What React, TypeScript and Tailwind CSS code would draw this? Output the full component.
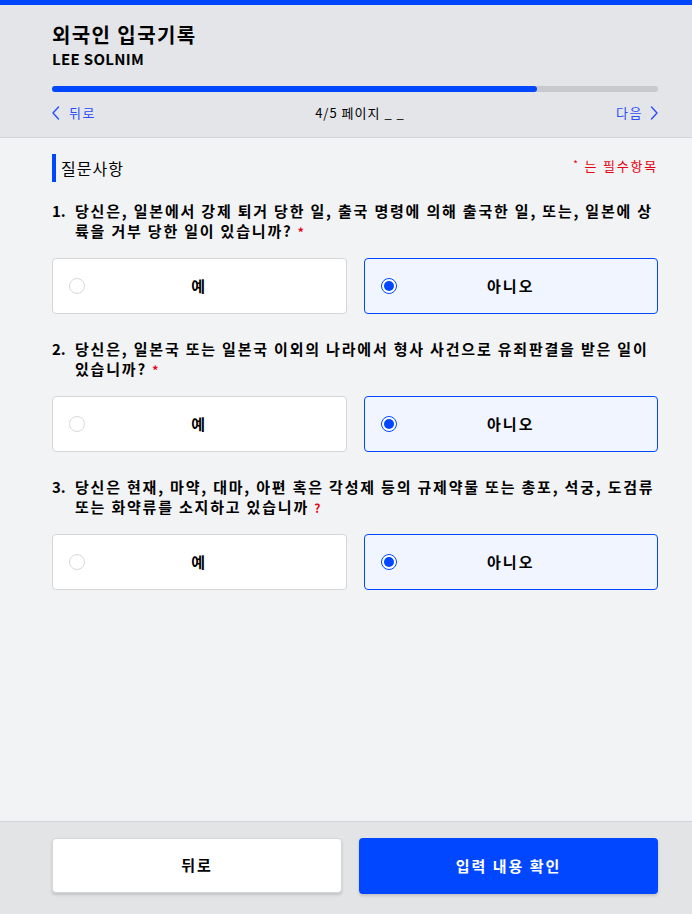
const questions = [
  {
    no: "1.",
    text: "당신은, 일본에서 강제 퇴거 당한 일, 출국 명령에 의해 출국한 일, 또는, 일본에 상륙을 거부 당한 일이 있습니까?",
    mark: "*",
  },
  {
    no: "2.",
    text: "당신은, 일본국 또는 일본국 이외의 나라에서 형사 사건으로 유죄판결을 받은 일이 있습니까?",
    mark: "*",
  },
  {
    no: "3.",
    text: "당신은 현재, 마약, 대마, 아편 혹은 각성제 등의 규제약물 또는 총포, 석궁, 도검류 또는 화약류를 소지하고 있습니까",
    mark: "?",
  },
];

const Chevron = ({ dir }: { dir: "left" | "right" }) => (
  <svg width="8" height="14" viewBox="0 0 8 14" fill="none" className="shrink-0">
    <polyline
      points={dir === "left" ? "6.5,1 1,7 6.5,13" : "1.5,1 7,7 1.5,13"}
      stroke="#2a4dff"
      strokeWidth="1.4"
      strokeLinecap="round"
      strokeLinejoin="round"
    />
  </svg>
);

const Option = ({ label, selected }: { label: string; selected: boolean }) => (
  <div
    className={
      selected
        ? "relative flex h-[56px] items-center justify-center rounded-[4px] border border-[#0047ff] bg-[#f0f5ff]"
        : "relative flex h-[56px] items-center justify-center rounded-[4px] border border-[#d6d6d6] bg-white"
    }
  >
    <span
      className={
        selected
          ? "absolute left-[16px] top-1/2 flex h-[16px] w-[16px] -translate-y-1/2 items-center justify-center rounded-full border border-[#0047ff] bg-white"
          : "absolute left-[16px] top-1/2 h-[16px] w-[16px] -translate-y-1/2 rounded-full border border-[#d9d9d9] bg-white"
      }
    >
      {selected && <span className="h-[10px] w-[10px] rounded-full bg-[#0047ff]" />}
    </span>
    <span className="text-[15px] font-bold tracking-[2px] text-black">{label}</span>
  </div>
);

export default function App() {
  return (
    <div
      className="flex h-[914px] w-[692px] flex-col bg-[#f2f3f5]"
      style={{ fontFamily: '"Noto Sans CJK KR", "Noto Sans", sans-serif' }}
    >
      <div className="h-[5px] bg-[#0047ff]" />
      {/* Header */}
      <div className="border-b border-[#d4d5d8] bg-[#e4e5e8] pl-[52px] pr-[34px] pt-[16px] pb-[15px]">
        <h1 className="text-[20px] font-bold leading-[28px] tracking-[1.4px] text-black">외국인 입국기록</h1>
        <div className="text-[15px] font-bold leading-[20px] tracking-[0.3px] text-black">LEE SOLNIM</div>
        <div className="mt-[17px] h-[6px] w-full rounded-full bg-[#c8c9cc]">
          <div className="h-full w-[80%] rounded-full bg-[#0047ff]" />
        </div>
        <div className="mt-[12px] flex items-center justify-between text-[13px] leading-[18px]">
          <div className="flex items-center gap-[9px] tracking-[1.5px] text-[#2a4dff]">
            <Chevron dir="left" />
            <span>뒤로</span>
          </div>
          <div className="pl-[8px] tracking-[1px] text-black">4/5 페이지 _ _</div>
          <div className="flex items-center gap-[7px] tracking-[1.5px] text-[#2a4dff]">
            <span>다음</span>
            <Chevron dir="right" />
          </div>
        </div>
      </div>

      {/* Content */}
      <div className="flex-1 pl-[52px] pr-[34px] pt-[16px]">
        <div className="flex items-start justify-between">
          <div className="flex h-[28px] items-center border-l-[4px] border-[#0047ff] pl-[5px] text-[16px] tracking-[1px] text-black">
            질문사항
          </div>
          <div className="pt-[2px] text-[13px] tracking-[1.8px] text-[#e60012]">
            <span className="align-top text-[10px]">*</span> 는 필수항목
          </div>
        </div>

        {questions.map((q, i) => (
          <div key={i} className={i === 0 ? "mt-[19px]" : "mt-[25px]"}>
            <div className="flex text-[15px] font-bold leading-[20px] tracking-[1.8px] text-black">
              <span className="w-[23px] shrink-0 tracking-normal">{q.no}</span>
              <span>
                {q.text}{" "}
                <span className="text-[12px] leading-none text-[#e60012]">{q.mark}</span>
              </span>
            </div>
            <div className="mt-[17px] grid grid-cols-2 gap-[17px]">
              <Option label="예" selected={false} />
              <Option label="아니오" selected />
            </div>
          </div>
        ))}
      </div>

      {/* Footer */}
      <div className="flex h-[93px] gap-[17px] border-t border-[#d4d5d8] bg-[#e3e4e6] pl-[52px] pr-[34px] pt-[16px]">
        <button className="h-[55px] w-[290px] rounded-[4px] border border-[#d6d6d6] bg-white text-[15px] font-bold tracking-[2px] text-black shadow-[0_2px_3px_rgba(0,0,0,0.15)]">
          뒤로
        </button>
        <button className="h-[56px] flex-1 rounded-[4px] bg-[#0047ff] text-[15px] font-bold tracking-[2px] text-white shadow-[0_2px_3px_rgba(0,0,0,0.15)]">
          입력 내용 확인
        </button>
      </div>
    </div>
  );
}
